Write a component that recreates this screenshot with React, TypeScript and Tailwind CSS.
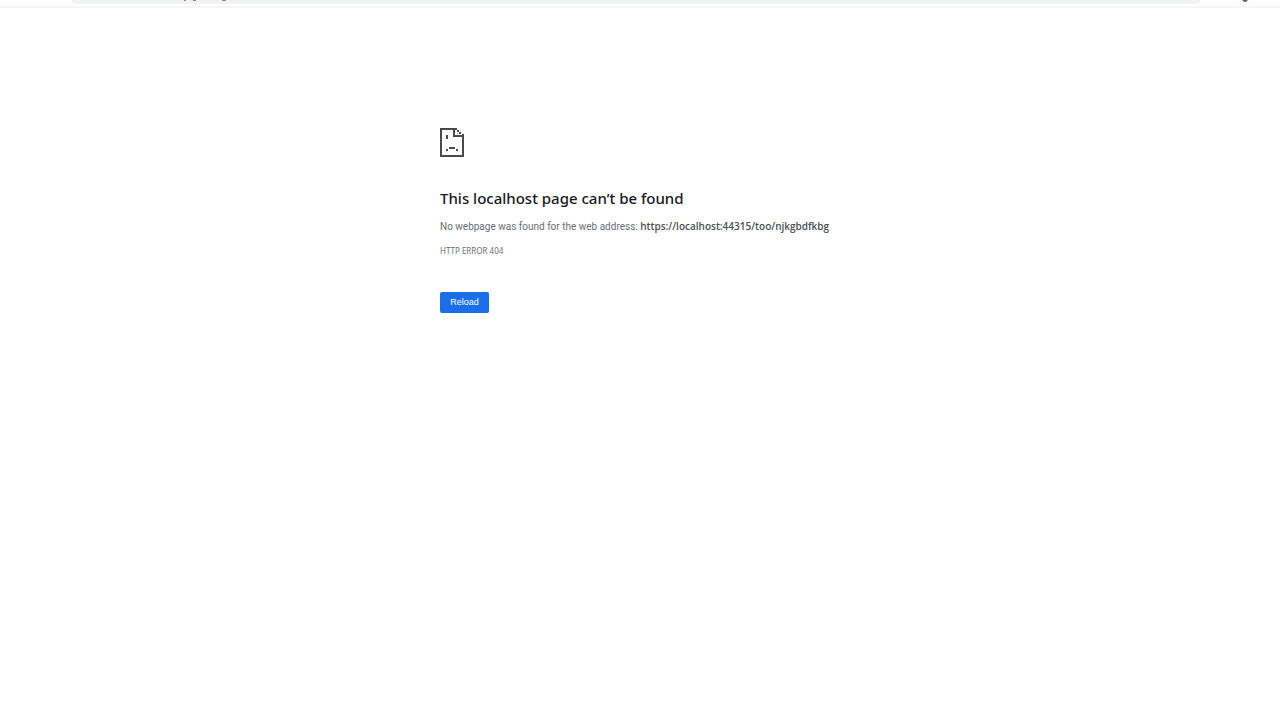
import React from "react";

// Sad page icon
const SadPageIcon = () => (
  <svg
    className="block w-6 h-[29px]"
    viewBox="0 0 24 29"
    fill="#4a4a4a"
    aria-hidden="true"
  >
    {/* sheet outline */}
    <path d="M0 0H17V2H2V27H22V9H13V2H15V7H24V29H0Z" />
    {/* folded corner */}
    <path d="M17 2H19V4H17ZM19 4H21V6H19ZM22 6H24V8H22Z" />
    <path d="M17 5H18V6H17Z" fill="#9a9a9a" />
    {/* eye */}
    <path d="M6 7H8V11H6Z" />
    {/* mouth */}
    <path d="M9 19H15V21H9ZM6 21H8V23H6ZM16 21H18V23H16Z" />
  </svg>
);

// Bottom edge of the browser toolbar
const ToolbarEdge = () => (
  <header className="flex h-2 items-start border-b-2 border-[#f5f5f5] bg-white pl-[72px]">
    <div className="h-1 flex-1 rounded-b-full bg-[#f1f2f4]">
      <svg className="ml-[112px] block h-1 w-12" viewBox="0 0 48 4" fill="#888888" aria-hidden="true">
        <path d="M0 0h2v1H0zM9 0h3v1H9zM38 0h4v1h-4z" />
      </svg>
    </div>
    <svg className="mr-7 ml-10 block h-1 w-3" viewBox="0 0 12 4" aria-hidden="true">
      <path d="M2 0h6L6 2H4z" fill="#75696b" />
    </svg>
  </header>
);

export default function App() {
  return (
    <div className="min-h-screen bg-white font-['Noto_Sans','Open_Sans',sans-serif] text-[#6b6e72]">
      <ToolbarEdge />
      <main className="mx-auto w-[400px] pt-[120px]">
        <SadPageIcon />
        <h1 className="mt-[29px] text-[15px] leading-6 font-medium text-[#18191b]">
          This localhost page can’t be found
        </h1>
        <p className="mt-2 font-[Roboto,sans-serif] text-[10px] leading-4 whitespace-nowrap">
          No webpage was found for the web address:{" "}
          <strong className="font-['Open_Sans',sans-serif] font-semibold text-[#4c4f53]">
            https://localhost:44315/too/njkgbdfkbg
          </strong>
        </p>
        <p className="mt-2 text-[8px] leading-4">HTTP ERROR 404</p>
        <button
          type="button"
          className="mt-[33px] flex h-[21px] w-[49px] items-center justify-center rounded-xs bg-[#1a6fe8] font-['Liberation_Sans',Arial,sans-serif] text-[9px] text-white"
        >
          Reload
        </button>
      </main>
    </div>
  );
}
